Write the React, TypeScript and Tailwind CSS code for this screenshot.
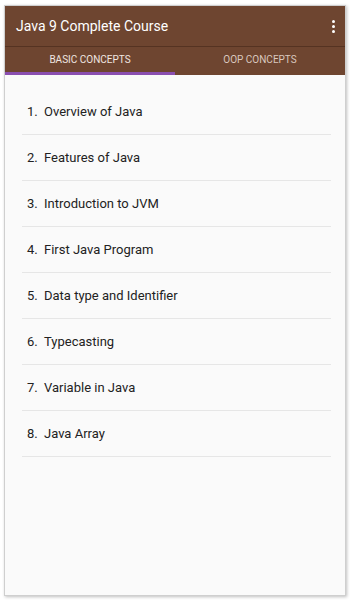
export default function App() {

  const topicos = [
    "Overview of Java",
    "Features of Java",
    "Introduction to JVM",
    "First Java Program",
    "Data type and Identifier",
    "Typecasting",
    "Variable in Java",
    "Java Array",
  ];

  return (
    <div
      className="h-[600px] w-[350px] bg-white px-[4px] pb-[4px] pt-[5px]"
      style={{ fontFamily: "Roboto, 'Noto Sans', sans-serif" }}
    >
      <div className="flex h-full flex-col border border-[#cfcfcf] shadow-[1px_1px_3px_rgba(0,0,0,0.25)]">

        {/* TOOLBAR */}

        <div className="flex h-[40px] items-center justify-between bg-[#6e4530] pl-[11px] pr-[10px]">
          <h1 className="text-[14px] text-white">
            Java 9 Complete Course
          </h1>
          <div className="flex flex-col gap-[2px]">
            <span className="h-[3px] w-[3px] rounded-full bg-white" />
            <span className="h-[3px] w-[3px] rounded-full bg-white" />
            <span className="h-[3px] w-[3px] rounded-full bg-white" />
          </div>
        </div>

        <div className="h-[1px] bg-[#553322]" />

        {/* TABS */}

        <div className="flex h-[28px] bg-[#6e4530]">
          <div className="flex flex-1 flex-col">
            <div className="flex flex-1 items-center justify-center text-[10px] text-[#f0e6e0]">
              BASIC CONCEPTS
            </div>
            <div className="h-[3px] bg-[#8a4fb0]" />
          </div>
          <div className="flex flex-1 items-center justify-center pb-[3px] text-[10px] text-[#d9c8bf]">
            OOP CONCEPTS
          </div>
        </div>

        {/* LISTA */}

        <div className="flex-1 bg-[#fafafa] pl-[17px] pr-[14px] pt-[14px]">
          {topicos.map((topico, i) => (
            <div
              key={topico}
              className="flex h-[46px] items-center border-b border-[#e6e6e6] pl-[5px] text-[13px] text-[#222]"
            >
              <span className="w-[17px]">{i + 1}.</span>
              <span>{topico}</span>
            </div>
          ))}
        </div>

      </div>
    </div>
  );
}
